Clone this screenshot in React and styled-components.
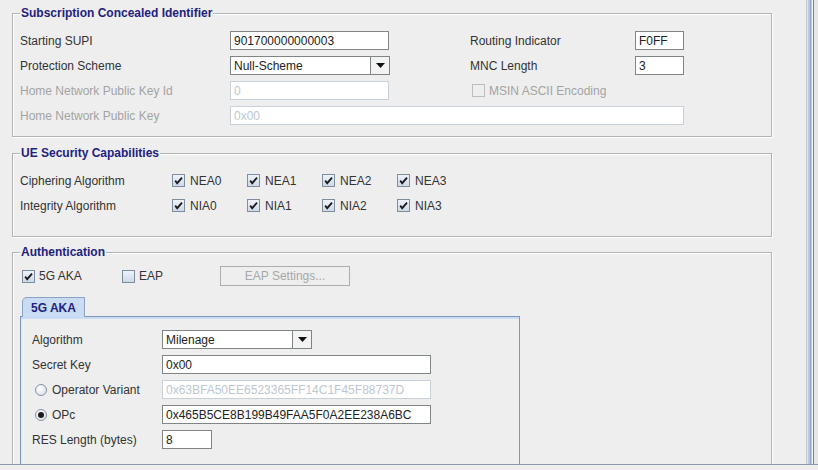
import React from 'react';
import styled, { createGlobalStyle } from 'styled-components';

const Global = createGlobalStyle`
  html, body { margin: 0; padding: 0; background: #eeeeee; }
  body { font-family: "Liberation Sans", Arial, sans-serif; font-size: 12px; color: #333333; }
  * { box-sizing: border-box; }
`;

const Frame = styled.div`
  width: 818px;
  height: 470px;
  overflow: hidden;
  background: #eeeeee;
`;

const Viewport = styled.div`
  display: flex;
  height: 465px;
  border-bottom: 1px solid #8a98aa;
  overflow: hidden;
`;

const Content = styled.div`
  flex: 1;
  display: flex;
  flex-direction: column;
  padding: 6px 0 0 12px;
`;

const ScrollStrip = styled.div`
  width: 16px;
  flex: none;
  background: linear-gradient(to right,
    #eeeeee 0 4px, #c9c9c9 4px 5px, #dbe6f4 5px 6px, #b7cbe6 6px 8px,
    #8ea7cf 8px 9px, #b7cbe6 9px 10px, #f4f7fb 10px 11px, #74859a 11px 12px,
    #e6e6e6 12px 16px);
`;

const Group = styled.fieldset`
  margin: ${p => p.$mt || 0}px 0 0 0;
  width: 760px;
  min-inline-size: 0;
  padding: ${p => p.$pad};
  border: 1px solid #b3b3b3;
  box-shadow: inset 1px 1px 0 #ffffff, 1px 1px 0 #ffffff;
`;

const Legend = styled.legend`
  padding: 0 1px;
  font-weight: bold;
  font-size: 12px;
  line-height: 14px;
  color: #22227e;
  background: #eeeeee;
`;

const Label = styled.span`
  color: ${p => (p.$disabled ? '#a3a3a3' : '#333333')};
  white-space: nowrap;
`;

const Field = styled.div`
  width: ${p => (p.$w ? `${p.$w}px` : 'auto')};
  grid-column: ${p => p.$span || 'auto'};
  height: 19px;
  display: flex;
  align-items: center;
  padding: 0 3px;
  background: #ffffff;
  border: 1px solid ${p => (p.$disabled ? '#c8d0da' : '#7f8487')};
  color: ${p => (p.$disabled ? '#bcc7d2' : '#222222')};
  white-space: nowrap;
  overflow: hidden;
`;

const Combo = styled.div`
  width: ${p => p.$w}px;
  height: 19px;
  display: flex;
  border: 1px solid #7f8487;
  background: #ffffff;
`;

const ComboText = styled.span`
  flex: 1;
  display: flex;
  align-items: center;
  padding: 0 3px;
  color: #222222;
`;

const ComboButton = styled.span`
  width: 19px;
  flex: none;
  display: flex;
  align-items: center;
  justify-content: center;
  border-left: 1px solid #7f8487;
  background: #f3f3f3;
`;

const SciGrid = styled.div`
  display: grid;
  grid-template-columns: 210px 159px 81px 165px 49px;
  grid-auto-rows: 19px;
  row-gap: 6px;
  align-items: center;
`;

const CapGrid = styled.div`
  display: grid;
  grid-template-columns: 152px repeat(4, 75px);
  grid-auto-rows: 19px;
  row-gap: 6px;
  align-items: center;
`;

const CheckItem = styled.span`
  display: inline-flex;
  align-items: center;
  gap: ${p => p.$gap || 4}px;
  margin-left: ${p => p.$ml || 0}px;
  color: ${p => (p.$disabled ? '#a3a3a3' : '#333333')};
  white-space: nowrap;
`;

const Box = styled.span`
  width: 13px;
  height: 13px;
  flex: none;
  display: inline-flex;
  align-items: center;
  justify-content: center;
  border: 1px solid ${p => (p.$disabled ? '#bdbdbd' : '#7e8c9c')};
  background: ${p => (p.$disabled ? '#eeeeee' : 'linear-gradient(#eef3f9, #cdd9e7)')};
`;

const RadioCircle = styled.span`
  width: 12px;
  height: 12px;
  flex: none;
  border-radius: 50%;
  border: 1px solid #8594a8;
  background: radial-gradient(circle at 40% 35%, #ffffff, #d3dbe5);
  display: inline-flex;
  align-items: center;
  justify-content: center;
  &::after {
    content: '';
    width: 6px;
    height: 6px;
    border-radius: 50%;
    background: #1c1c1c;
    display: ${p => (p.$on ? 'block' : 'none')};
  }
`;

const AuthTop = styled.div`
  display: grid;
  grid-template-columns: 100px 98px 130px;
  height: 20px;
  align-items: center;
  margin-left: 2px;
`;

const Button = styled.button`
  width: 130px;
  height: 20px;
  padding: 0;
  font: inherit;
  color: #a8a8a8;
  background: #eeeeee;
  border: 1px solid #adadad;
`;

const TabStrip = styled.div`
  display: flex;
  margin-top: 11px;
  padding-left: 2px;
`;

const Tab = styled.div`
  position: relative;
  z-index: 1;
  width: 63px;
  height: 20px;
  margin-bottom: -1px;
  display: flex;
  align-items: center;
  justify-content: center;
  border: 1px solid #8aa2c6;
  border-bottom: none;
  border-radius: 5px 0 0 0;
  background: #c9dcf3;
  color: #22227e;
  font-weight: bold;
`;

const TabPanel = styled.div`
  width: 500px;
  border: 1px solid #7f96ba;
  box-shadow: inset 0 2px 0 #c9dcf3, inset 1px 0 0 #dfe9f6;
  padding: 13px 0 24px 11px;
  display: grid;
  grid-template-columns: 130px auto;
  grid-auto-rows: 19px;
  row-gap: 6px;
  align-items: center;
  justify-items: start;
`;

const Check = () => (
  <svg width="9" height="9" viewBox="0 0 9 9">
    <path d="M1.2 4.6 L3.2 7.2 L8 1.6" fill="none" stroke="#1a1a1a" strokeWidth="1.8" />
  </svg>
);

const Arrow = () => (
  <svg width="9" height="5" viewBox="0 0 9 5">
    <polygon points="0,0 9,0 4.5,5" fill="#111111" />
  </svg>
);

const CheckBox = ({ checked, disabled, children, ml, gap }) => (
  <CheckItem $disabled={disabled} $ml={ml} $gap={gap}>
    <Box $disabled={disabled}>{checked && <Check />}</Box>
    {children}
  </CheckItem>
);

const Radio = ({ on, children }) => (
  <CheckItem $ml={3} $gap={5}>
    <RadioCircle $on={on} />
    {children}
  </CheckItem>
);

const ComboBox = ({ w, value }) => (
  <Combo $w={w}>
    <ComboText>{value}</ComboText>
    <ComboButton>
      <Arrow />
    </ComboButton>
  </Combo>
);

const caps = [
  ['Ciphering Algorithm', ['NEA0', 'NEA1', 'NEA2', 'NEA3']],
  ['Integrity Algorithm', ['NIA0', 'NIA1', 'NIA2', 'NIA3']],
];

export default function App() {
  return (
    <Frame>
      <Global />
      <Viewport>
        <Content>
          <Group $pad="11px 0 11px 7px">
            <Legend>Subscription Concealed Identifier</Legend>
            <SciGrid>
              <Label>Starting SUPI</Label>
              <Field $w={159}>901700000000003</Field>
              <span />
              <Label>Routing Indicator</Label>
              <Field $w={49}>F0FF</Field>

              <Label>Protection Scheme</Label>
              <ComboBox w={160} value="Null-Scheme" />
              <span />
              <Label>MNC Length</Label>
              <Field $w={49}>3</Field>

              <Label $disabled>Home Network Public Key Id</Label>
              <Field $w={159} $disabled>0</Field>
              <span />
              <CheckBox disabled ml={2}>MSIN ASCII Encoding</CheckBox>
              <span />

              <Label $disabled>Home Network Public Key</Label>
              <Field $span="2 / 6" $disabled>0x00</Field>
            </SciGrid>
          </Group>

          <Group $mt={9} $pad="11px 0 21px 7px">
            <Legend>UE Security Capabilities</Legend>
            <CapGrid>
              {caps.map(([name, algs]) => (
                <React.Fragment key={name}>
                  <Label>{name}</Label>
                  {algs.map(a => (
                    <CheckBox key={a} checked gap={5}>{a}</CheckBox>
                  ))}
                </React.Fragment>
              ))}
            </CapGrid>
          </Group>

          <Group $mt={8} $pad="7px 0 20px 7px">
            <Legend>Authentication</Legend>
            <AuthTop>
              <CheckBox checked>5G AKA</CheckBox>
              <CheckBox>EAP</CheckBox>
              <Button disabled>EAP Settings...</Button>
            </AuthTop>
            <TabStrip>
              <Tab>5G AKA</Tab>
            </TabStrip>
            <TabPanel>
              <Label>Algorithm</Label>
              <ComboBox w={150} value="Milenage" />
              <Label>Secret Key</Label>
              <Field $w={269}>0x00</Field>
              <Radio>Operator Variant</Radio>
              <Field $w={269} $disabled>0x63BFA50EE6523365FF14C1F45F88737D</Field>
              <Radio on>OPc</Radio>
              <Field $w={269}>0x465B5CE8B199B49FAA5F0A2EE238A6BC</Field>
              <Label>RES Length (bytes)</Label>
              <Field $w={50}>8</Field>
            </TabPanel>
          </Group>
        </Content>
        <ScrollStrip />
      </Viewport>
    </Frame>
  );
}
